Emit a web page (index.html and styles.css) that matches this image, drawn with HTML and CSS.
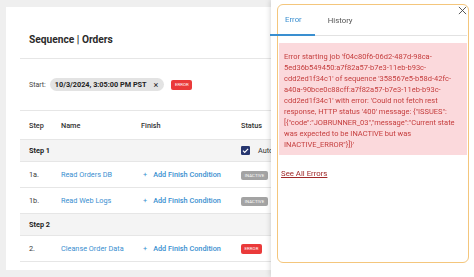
FILE: index.html
```html
<!DOCTYPE html>
<html lang="en">
<head>
  <meta charset="UTF-8" />
  <meta name="viewport" content="width=device-width, initial-scale=1.0"/>
  <title>Sequence | Orders</title>
  <link rel="stylesheet" href="styles.css">
</head>
<body>
  <main class="card">
    <h1 class="title">Sequence | Orders</h1>

    <div class="start-row">
      <span class="start-label">Start:</span>
      <span class="chip">10/3/2024, 3:05:00 PM PST <span class="chip-x">&times;</span></span>
      <span class="badge badge-error">ERROR</span>
    </div>

    <div class="table">
      <div class="row head">
        <span>Step</span><span>Name</span><span>Finish</span><span>Status</span>
      </div>
      <div class="row group">
        <span class="group-name">Step 1</span>
        <span class="auto">
          <svg class="check" viewBox="0 0 10 10"><rect width="10" height="10" rx="1.5" fill="#26366f"/><path d="M2.2 5.2l1.9 1.9 3.8-4" fill="none" stroke="#fff" stroke-width="1.3"/></svg>
          Auto
        </span>
      </div>
      <div class="row">
        <span class="num">1a.</span>
        <a class="link">Read Orders DB</a>
        <a class="add"><span class="plus">+</span>Add Finish Condition</a>
        <span><span class="badge badge-inactive">INACTIVE</span></span>
      </div>
      <div class="row">
        <span class="num">1b.</span>
        <a class="link">Read Web Logs</a>
        <a class="add"><span class="plus">+</span>Add Finish Condition</a>
        <span><span class="badge badge-inactive">INACTIVE</span></span>
      </div>
      <div class="row group">
        <span class="group-name">Step 2</span>
      </div>
      <div class="row">
        <span class="num">2.</span>
        <a class="link">Cleanse Order Data</a>
        <a class="add"><span class="plus">+</span>Add Finish Condition</a>
        <span><span class="badge badge-error">ERROR</span></span>
      </div>
    </div>
  </main>

  <aside class="drawer">
    <svg class="close" viewBox="0 0 10 10"><path d="M1 1l8 8M9 1l-8 8" stroke="#444" stroke-width="1"/></svg>
    <div class="drawer-box">
      <div class="tabs">
        <span class="tab active">Error</span>
        <span class="tab">History</span>
      </div>
      <div class="error-box">
        Error starting job 'f04c80f6-06d2-487d-98ca-5ed36b549450:a7f82a57-b7e3-11eb-b93c-cdd2ed1f34c1' of sequence '358567e5-b58d-42fc-a40a-90bce0c88cff:a7f82a57-b7e3-11eb-b93c-cdd2ed1f34c1' with error: 'Could not fetch rest response, HTTP status '400' message: {"ISSUES":[{"code":"JOBRUNNER_03","message":"Current state was expected to be INACTIVE but was INACTIVE_ERROR"}]}'
      </div>
      <a class="see-all">See All Errors</a>
    </div>
  </aside>
</body>
</html>
```

FILE: styles.css
```css
:root {
  --blue: #3a8fd0;
  --text: #2b2b2b;
  --line: #e6e6e6;
  --red: #ea3a3a;
}
* {
  margin: 0;
  padding: 0;
  box-sizing: border-box;
}
body {
  font-family: Roboto, "Liberation Sans", sans-serif;
  background: #efefef;
  color: var(--text);
  height: 277px;
  overflow: hidden;
  padding: 7px 0 0 6px;
}
.card {
  background: #fff;
  width: 330px;
  height: 263px;
  padding-left: 14px;
}
.title {
  font-size: 10.2px;
  font-weight: 700;
  line-height: 14px;
  padding: 26px 0 11px 9px;
  border-bottom: 1px solid var(--line);
}
.start-row {
  height: 52px;
  display: flex;
  align-items: center;
  padding-left: 9px;
  border-bottom: 1px solid var(--line);
  font-size: 7px;
}
.start-label {
  color: #444;
  margin-right: 4px;
}
.chip {
  display: inline-flex;
  align-items: center;
  height: 13px;
  padding: 0 6px 0 5px;
  border-radius: 7px;
  background: #e3e3e3;
  font-weight: 700;
  font-size: 7.3px;
  color: #222;
}
.chip-x {
  font-weight: 400;
  font-size: 9px;
  margin-left: 7px;
}
.badge {
  display: inline-flex;
  align-items: center;
  justify-content: center;
  height: 10px;
  border-radius: 2px;
  color: #fff;
  font-size: 4.3px;
  letter-spacing: 0.1px;
}
.start-row .badge {
  margin-left: 7px;
  width: 21px;
}
.badge-error {
  background: var(--red);
  width: 21px;
}
.badge-inactive {
  background: #a3a3a3;
  width: 27px;
  height: 9px;
}
.row {
  display: grid;
  grid-template-columns: 32px 80px 100px 1fr;
  align-items: center;
  height: 26px;
  padding-left: 9px;
  border-bottom: 1px solid var(--line);
  font-size: 7.3px;
  color: #444;
}
.row .num {
  color: #3c3c3c;
}
.row.head {
  height: 29px;
  color: #333;
  font-weight: 500;
}
.row.group {
  height: 22px;
  background: #f4f4f4;
  grid-template-columns: 212px 1fr;
}
.group-name {
  font-weight: 700;
  color: #222;
}
.auto {
  display: flex;
  align-items: center;
  gap: 8px;
  color: #333;
}
.check {
  width: 9px;
  height: 9px;
}
.link {
  color: var(--blue);
}
.add {
  color: var(--blue);
  font-weight: 500;
}
.plus {
  display: inline-block;
  margin: 0 6px 0 2px;
  font-weight: 400;
}
.drawer {
  position: fixed;
  top: 0;
  right: 0;
  width: 203px;
  height: 277px;
  background: #fff;
  box-shadow: -1px 0 5px rgba(0, 0, 0, 0.15);
  padding: 4px 5px 14px 6px;
}
.close {
  position: absolute;
  top: 6px;
  right: 7px;
  width: 9px;
  height: 9px;
}
.drawer-box {
  height: 100%;
  border: 1.5px solid #f4c67c;
  border-radius: 6px;
  padding: 0 1px;
}
.tabs {
  display: flex;
  height: 31px;
  margin-left: -9px;
  border-bottom: 1px solid #e2e2e2;
  font-size: 7.8px;
}
.tab {
  display: flex;
  align-items: center;
  padding: 0 13px 0 15px;
  color: #555;
}
.tab + .tab {
  padding-left: 13px;
}
.tab.active {
  color: var(--blue);
  border-bottom: 2px solid var(--blue);
  margin-bottom: -1px;
}
.error-box {
  margin-top: 7px;
  background: #fbd9dc;
  color: #c53d3d;
  font-size: 7.5px;
  line-height: 11px;
  padding: 8px 8px 5px 5px;
  overflow-wrap: anywhere;
}
.see-all {
  display: inline-block;
  margin: 14px 0 0 2px;
  font-size: 7.8px;
  color: #a02828;
  text-decoration: underline;
}
```
